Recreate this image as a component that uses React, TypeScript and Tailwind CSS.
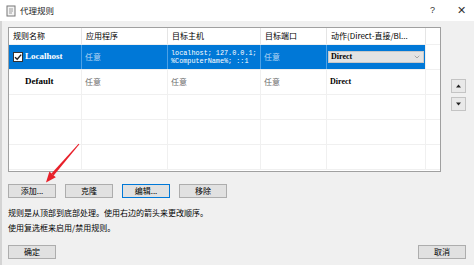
import { ChevronDown } from 'lucide-react';

const CJK = "font-['Noto_Sans_CJK_SC',sans-serif]";
const SERIF = "font-['Liberation_Serif','Noto_Sans_CJK_SC',serif]";
const COLS = 'grid grid-cols-[73px_86px_93px_66px_99px_1fr]';

function CheckBox() {
  return (
    <svg width="10" height="10" viewBox="0 0 10 10">
      <rect x="0.5" y="0.5" width="9" height="9" fill="#fff" stroke="#333" />
      <path d="M2 5.2 L4.2 7.3 L8.2 2.6" fill="none" stroke="#222" strokeWidth="1.4" />
    </svg>
  );
}

function Btn({ label, focus }: { label: string; focus?: boolean }) {
  return (
    <button
      className={`w-[48px] h-[14px] bg-[#e1e1e1] text-[8px] leading-none text-black ${CJK} border ${
        focus ? 'border-[#0078d7]' : 'border-[#adadad]'
      }`}
    >
      {label}
    </button>
  );
}

function EmptyRow() {
  return (
    <div className={`${COLS} h-[25px] border-b border-[#f0f0f0]`}>
      {[0, 1, 2, 3, 4, 5].map(i => (
        <div key={i} className={i < 5 ? 'border-r border-[#f0f0f0]' : ''} />
      ))}
    </div>
  );
}

export default function App() {
  return (
    <div className={`relative w-[474px] h-[265px] bg-[#f0f0f0] overflow-hidden ${CJK}`}>
      {/* title bar */}
      <div className="h-[21px] bg-white flex items-center pl-[6px] pr-[8px]">
        <svg width="10" height="12" viewBox="0 0 10 12">
          <rect x="1" y="1" width="8" height="10" fill="#f4f4f4" stroke="#777" />
          <path d="M3 4h4M3 6h4M3 8h3" stroke="#888" strokeWidth="0.8" />
        </svg>
        <span className="ml-[4px] text-[8.5px] text-[#222]">代理规则</span>
        <span className="ml-auto text-[9px] text-[#333] font-['Liberation_Sans',sans-serif]">?</span>
        <span className="ml-[22px] text-[11px] text-[#333] font-['Liberation_Sans',sans-serif]">✕</span>
      </div>

      {/* body */}
      <div className="h-[244px] border-l-2 border-[#d4d4d4] pl-[6px] pr-[8px] pt-[6px] flex flex-col">
        <div className="flex">
          {/* table */}
          <div className="w-[434px] h-[145px] bg-white border border-[#a0a0a0] overflow-hidden">
            <div className={`${COLS} h-[17px] text-[8px] text-black border-b border-[#f0f0f0]`}>
              {['规则名称', '应用程序', '目标主机', '目标端口', '动作(Direct-直接/Bl...'].map(h => (
                <div key={h} className="border-r border-[#e5e5e5] pl-[4px] flex items-center whitespace-nowrap overflow-hidden">
                  {h}
                </div>
              ))}
              <div />
            </div>

            {/* selected row */}
            <div className={`${COLS} h-[25px] border-b border-[#f0f0f0]`}>
              <div className="bg-[#0078d7] border-r border-[#4da1e6] flex items-center pl-[4px] gap-[2px]">
                <CheckBox />
                <span className={`${SERIF} font-bold text-[9px] text-white`}>Localhost</span>
              </div>
              <div className="bg-[#0078d7] border-r border-[#4da1e6] flex items-center pl-[3px] text-[8px] text-[#b4d6f4]">
                任意
              </div>
              <div className="bg-[#0078d7] border-r border-[#4da1e6] flex flex-col justify-center pl-[3px] font-['Liberation_Mono',monospace] text-[6.8px] leading-[8px] text-white whitespace-nowrap overflow-hidden">
                <span>localhost; 127.0.0.1;</span>
                <span>%ComputerName%; ::1</span>
              </div>
              <div className="bg-[#0078d7] border-r border-[#4da1e6] flex items-center pl-[3px] text-[8px] text-[#b4d6f4]">
                任意
              </div>
              <div className="bg-[#0078d7] border-r border-[#f0f0f0] flex items-center px-[1px]">
                <div className="w-full h-[12px] bg-[#e3e3e3] border border-[#c8c8c8] flex items-center pl-[2px] pr-[2px]">
                  <span className={`${SERIF} font-bold text-[8px] text-black`}>Direct</span>
                  <ChevronDown size={8} strokeWidth={1.5} className="ml-auto text-[#666]" />
                </div>
              </div>
              <div />
            </div>

            {/* default row */}
            <div className={`${COLS} h-[25px] border-b border-[#f0f0f0]`}>
              <div className="border-r border-[#f0f0f0] flex items-center pl-[16px]">
                <span className={`${SERIF} font-bold text-[9px] text-black`}>Default</span>
              </div>
              <div className="border-r border-[#f0f0f0] flex items-center pl-[3px] text-[8px] text-[#6d6d6d]">任意</div>
              <div className="border-r border-[#f0f0f0] flex items-center pl-[3px] text-[8px] text-[#6d6d6d]">任意</div>
              <div className="border-r border-[#f0f0f0] flex items-center pl-[3px] text-[8px] text-[#6d6d6d]">任意</div>
              <div className="border-r border-[#f0f0f0] flex items-center pl-[3px]">
                <span className={`${SERIF} font-bold text-[8px] text-black`}>Direct</span>
              </div>
              <div />
            </div>

            <EmptyRow />
            <EmptyRow />
            <EmptyRow />
          </div>

          {/* up / down */}
          <div className="ml-[10px] mt-[52px] flex flex-col gap-[4px]">
            {['up', 'down'].map(d => (
              <button key={d} className="w-[15px] h-[14px] bg-[#e9e9e9] border border-[#c4c4c4] flex items-center justify-center">
                <svg width="5" height="4" viewBox="0 0 5 4">
                  <path d={d === 'up' ? 'M0 3.5 L2.5 0.5 L5 3.5Z' : 'M0 0.5 L2.5 3.5 L5 0.5Z'} fill="#222" />
                </svg>
              </button>
            ))}
          </div>
        </div>

        <div className="mt-[12px] flex gap-[9px]">
          <Btn label="添加..." />
          <Btn label="克隆" />
          <Btn label="编辑..." focus />
          <Btn label="移除" />
        </div>

        <p className="mt-[9px] text-[8px] leading-[12px] text-black">规则是从顶部到底部处理。使用右边的箭头来更改顺序。</p>
        <p className="mt-[3px] text-[8px] leading-[12px] text-black">使用复选框来启用/禁用规则。</p>

        <div className="mt-[11px] flex justify-between">
          <Btn label="确定" />
          <Btn label="取消" />
        </div>
      </div>

      {/* annotation arrow */}
      <svg className="absolute left-0 top-0 pointer-events-none" width="474" height="265">
        <polygon points="79.4,144.3 78.6,143.7 51.5,173.4 53.7,175.4" fill="#e8202a" />
        <polygon points="46,182.5 55.8,177.2 49.4,171.6" fill="#e8202a" />
      </svg>
    </div>
  );
}
